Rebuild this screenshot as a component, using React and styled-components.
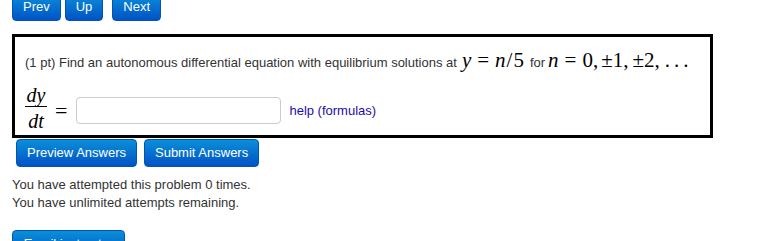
import React from "react";
import styled, { createGlobalStyle } from "styled-components";

const GlobalStyle = createGlobalStyle`
  body {
    margin: 0;
    background: #fff;
    font-family: "Liberation Sans", Arial, sans-serif;
    color: #333;
  }
`;

const Page = styled.div`
  padding-left: 12px;
  overflow: hidden;
  height: 241px;
`;

const NavRow = styled.div`
  display: flex;
  margin-top: -7px;
`;

const Button = styled.button`
  height: 28px;
  padding: 0 10px;
  margin-left: ${(props) => props.$gap || 0}px;
  border: 1px solid #0055b3;
  border-radius: 4px;
  background: linear-gradient(to bottom, #0a8fd8, #0053c6);
  color: #fff;
  font-family: "Liberation Sans", Arial, sans-serif;
  font-size: 13px;
  line-height: 26px;
  cursor: pointer;
`;

const ProblemBox = styled.div`
  width: 701px;
  height: 104px;
  box-sizing: border-box;
  margin-top: 13px;
  border: 3px solid #000;
  padding: 11px 10px 0;
`;

const Statement = styled.div`
  font-size: 13px;
  line-height: 24px;
  color: #333;
  white-space: nowrap;
`;

const Math = styled.span`
  font-family: "Liberation Serif", "Times New Roman", serif;
  font-size: 21px;
  color: #000;
  margin: 0 ${(props) => props.$after ?? 4}px 0 ${(props) => props.$before ?? 4}px;
`;

const Var = styled.i`
  font-style: italic;
`;

const Op = styled.span`
  margin: 0 ${(props) => props.$space ?? 5}px;
`;

const Dots = styled.span`
  letter-spacing: 4px;
  margin-left: 4px;
`;

const AnswerRow = styled.div`
  display: flex;
  align-items: center;
  margin-top: 10px;
`;

const Fraction = styled.span`
  display: inline-flex;
  flex-direction: column;
  align-items: center;
  margin-bottom: 4px;
  font-family: "Liberation Serif", "Times New Roman", serif;
  font-style: italic;
  font-size: 20px;
  line-height: 21px;
  color: #000;
  width: 22px;
`;

const FracPart = styled.span`
  width: 100%;
  text-align: center;
  border-top: ${(props) => (props.$bottom ? "1px solid #000" : "none")};
  padding-top: ${(props) => (props.$bottom ? "4px" : "0")};
`;

const Equals = styled.span`
  font-family: "Liberation Serif", "Times New Roman", serif;
  font-size: 22px;
  color: #000;
  margin: 0 9px 0 8px;
`;

const AnswerInput = styled.input`
  width: 205px;
  height: 27px;
  box-sizing: border-box;
  border: 1px solid #ccc;
  border-radius: 4px;
`;

const HelpLink = styled.a`
  font-size: 13px;
  color: #1a0dab;
  text-decoration: none;
  margin-left: 8px;
`;

const SubmitRow = styled.div`
  display: flex;
  gap: 7px;
  padding-left: 4px;
  margin-top: 1px;
`;

const Info = styled.div`
  font-size: 13px;
  line-height: 18px;
  margin-top: 9px;
`;

const EmailButton = styled(Button)`
  margin-top: 18px;
  width: 113px;
`;

export default function App() {
  return (
    <Page>
      <GlobalStyle />
      <NavRow>
        <Button>Prev</Button>
        <Button $gap={4}>Up</Button>
        <Button $gap={9}>Next</Button>
      </NavRow>
      <ProblemBox>
        <Statement>
          (1 pt) Find an autonomous differential equation with equilibrium
          solutions at
          <Math $before={5} $after={6}>
            <Var>y</Var>
            <Op $space={6}>=</Op>
            <Var>n</Var>
            <Op $space={1}>/</Op>5
          </Math>
          for
          <Math $before={3}>
            <Var>n</Var>
            <Op $space={6}>=</Op>0,<Op $space={3}>±1,</Op>
            <Op $space={1}>±2,</Op>
            <Dots>...</Dots>
          </Math>
        </Statement>
        <AnswerRow>
          <Fraction>
            <FracPart>dy</FracPart>
            <FracPart $bottom>dt</FracPart>
          </Fraction>
          <Equals>=</Equals>
          <AnswerInput type="text" />
          <HelpLink href="#">help (formulas)</HelpLink>
        </AnswerRow>
      </ProblemBox>
      <SubmitRow>
        <Button>Preview Answers</Button>
        <Button>Submit Answers</Button>
      </SubmitRow>
      <Info>
        You have attempted this problem 0 times.
        <br />
        You have unlimited attempts remaining.
      </Info>
      <EmailButton>Email instructor</EmailButton>
    </Page>
  );
}
